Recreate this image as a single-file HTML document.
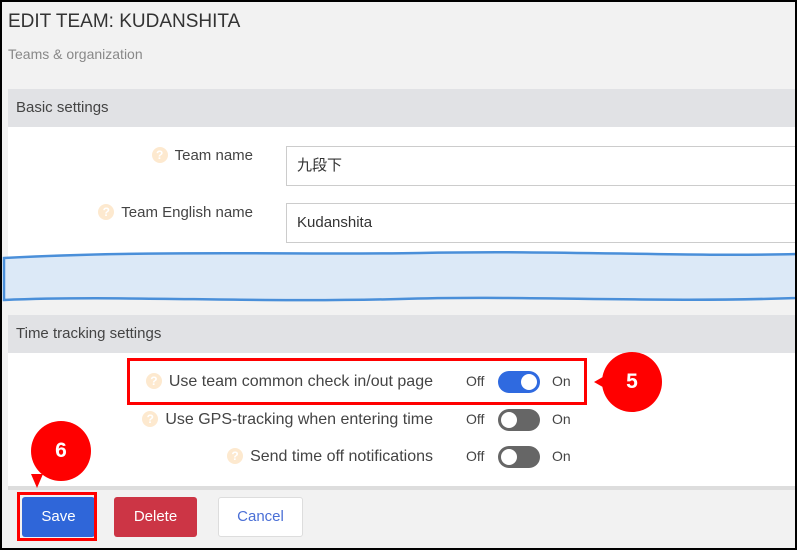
<!DOCTYPE html><html><head><meta charset="utf-8"><style>
*{box-sizing:border-box;margin:0;padding:0}
body{width:797px;height:550px;overflow:hidden;background:#f2f2f2;font-family:"Liberation Sans","Noto Sans CJK JP",sans-serif;position:relative;color:#333}
.abs{position:absolute}
.frame{left:0;top:0;width:797px;height:550px;border:2px solid #000;z-index:10;pointer-events:none}
.hdr{background:#e1e2e5;font-size:15px;color:#444;padding-left:8px;line-height:38px}
.white{background:#fff}
.lbl{font-size:15px;color:#444;text-align:right}
.lbl2{font-size:16px;color:#444;text-align:right;white-space:nowrap}
.q{display:inline-block;width:16px;height:16px;border-radius:50%;background:#fde9cf;color:#fff;font-size:12px;font-weight:bold;text-align:center;line-height:16px;margin-right:7px;vertical-align:1px}
.inp{border:1px solid #ccc;background:#fff;font-size:15px;padding-left:10px;line-height:38px}
.tg{width:42px;height:22px;border-radius:11px;background:#666}
.tg i{position:absolute;top:3px;left:3px;width:16px;height:16px;border-radius:50%;background:#fff}
.tg.on{background:#2f6ae0}.tg.on i{left:23px}
.sm{font-size:14px;color:#444}
.btn{font-size:15px;text-align:center;line-height:40px;border-radius:3px}
.circ{width:60px;height:60px;border-radius:50%;background:#f00;color:#fff;font-weight:bold;font-size:21px;text-align:center;line-height:60px}
</style></head><body>
<div class="abs frame"></div>
<div class="abs" style="left:8px;top:11px;font-size:19px;color:#333">EDIT TEAM: KUDANSHITA</div>
<div class="abs" style="left:8px;top:46px;font-size:14px;color:#888">Teams &amp; organization</div>
<div class="abs hdr" style="left:8px;top:89px;width:789px;height:38px">Basic settings</div>
<div class="abs white" style="left:8px;top:127px;width:789px;height:130px"></div>
<div class="abs lbl" style="left:100px;top:147px;width:153px"><span class="q">?</span>Team name</div>
<div class="abs lbl" style="left:40px;top:204px;width:213px"><span class="q">?</span>Team English name</div>
<div class="abs inp" style="left:286px;top:146px;width:520px;height:40px">九段下</div>
<div class="abs inp" style="left:286px;top:203px;width:520px;height:40px">Kudanshita</div>
<svg class="abs" style="left:0;top:245px" width="797" height="65"><path d="M4 13 C150 5 300 10 420 8 C560 5 680 12 797 9 L797 53 C650 58 520 50 400 54 C250 58 120 50 4 55 Z" fill="#dce9f7" stroke="#4a8fd9" stroke-width="2.5"/></svg>
<div class="abs hdr" style="left:8px;top:315px;width:789px;height:38px">Time tracking settings</div>
<div class="abs white" style="left:8px;top:353px;width:789px;height:133px"></div>
<div class="abs" style="left:8px;top:486px;width:789px;height:4px;background:#ddd"></div>
<div class="abs lbl2" style="left:60px;top:373px;width:373px"><span class="q">?</span>Use team common check in/out page</div>
<div class="abs lbl2" style="left:60px;top:411px;width:373px"><span class="q">?</span>Use GPS-tracking when entering time</div>
<div class="abs lbl2" style="left:60px;top:448px;width:373px"><span class="q">?</span>Send time off notifications</div>
<div class="abs sm" style="left:466px;top:373px">Off</div><div class="abs tg on" style="left:498px;top:371px"><i></i></div><div class="abs sm" style="left:552px;top:373px">On</div>
<div class="abs sm" style="left:466px;top:411px">Off</div><div class="abs tg" style="left:498px;top:409px"><i></i></div><div class="abs sm" style="left:552px;top:411px">On</div>
<div class="abs sm" style="left:466px;top:448px">Off</div><div class="abs tg" style="left:498px;top:446px"><i></i></div><div class="abs sm" style="left:552px;top:448px">On</div>
<div class="abs" style="left:127px;top:358px;width:460px;height:47px;border:3px solid #f00"></div>
<div class="abs" style="left:594px;top:374px;width:0;height:0;border-top:8px solid transparent;border-bottom:8px solid transparent;border-right:14px solid #f00"></div>
<div class="abs circ" style="left:602px;top:352px">5</div>
<div class="abs" style="left:31px;top:474px;width:0;height:0;border-left:6px solid transparent;border-right:6px solid transparent;border-top:14px solid #f00"></div>
<div class="abs circ" style="left:31px;top:421px">6</div>
<div class="abs btn" style="left:22px;top:497px;width:73px;height:40px;background:#2f66d9;color:#fff">Save</div>
<div class="abs" style="left:17px;top:492px;width:80px;height:49px;border:3px solid #f00"></div>
<div class="abs btn" style="left:114px;top:497px;width:83px;height:40px;background:#cc3545;color:#fff">Delete</div>
<div class="abs btn" style="left:218px;top:497px;width:85px;height:40px;background:#fff;border:1px solid #ddd;color:#4a6fd6;line-height:38px">Cancel</div>
</body></html>
